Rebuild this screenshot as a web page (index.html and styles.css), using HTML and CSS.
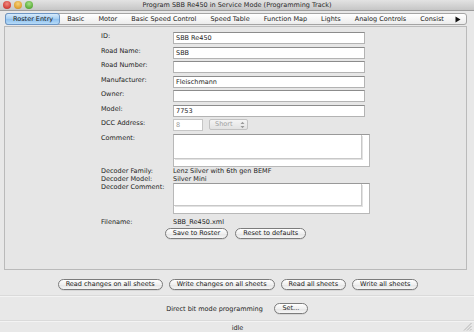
FILE: index.html
```html
<!DOCTYPE html>
<html>
<head>
<meta charset="utf-8">
<link rel="stylesheet" href="styles.css">
</head>
<body>
<div class="window">
  <div class="titlebar">
    <div class="lights">
      <span class="light red"></span>
      <span class="light yellow"></span>
      <span class="light green"></span>
    </div>
    <div class="title">Program SBB Re450 in Service Mode (Programming Track)</div>
  </div>
  <div class="tabwrap">
    <div class="tabs">
      <div class="tab sel">Roster Entry</div>
      <div class="tab">Basic</div>
      <div class="tab">Motor</div>
      <div class="tab">Basic Speed Control</div>
      <div class="tab">Speed Table</div>
      <div class="tab">Function Map</div>
      <div class="tab">Lights</div>
      <div class="tab">Analog Controls</div>
      <div class="tab">Consist</div>
      <div class="tab arrow"><svg width="6" height="7" viewBox="0 0 6 7"><path d="M0.5 0.5 L5.5 3.5 L0.5 6.5 Z" fill="#111"/></svg></div>
    </div>
  </div>
  <div class="panel">
    <div class="form">
      <div class="group">
        <div class="row"><div class="lbl">ID:</div><div class="field">SBB Re450</div></div>
        <div class="row"><div class="lbl">Road Name:</div><div class="field">SBB</div></div>
        <div class="row"><div class="lbl">Road Number:</div><div class="field"></div></div>
        <div class="row"><div class="lbl">Manufacturer:</div><div class="field">Fleischmann</div></div>
        <div class="row"><div class="lbl">Owner:</div><div class="field"></div></div>
        <div class="row"><div class="lbl">Model:</div><div class="field">7753</div></div>
        <div class="row">
          <div class="lbl">DCC Address:</div>
          <div class="dcc">
            <div class="field small dis">8</div>
            <div class="combo">Short<svg class="updown" width="5" height="8" viewBox="0 0 5 8"><path d="M0.5 3 L2.5 0.8 L4.5 3 Z M0.5 5 L2.5 7.2 L4.5 5 Z" fill="#9a9a9a"/></svg></div>
          </div>
        </div>
        <div class="row tall"><div class="lbl">Comment:</div><div class="scroll"><div class="area"></div></div></div>
      </div>
      <div class="group2">
        <div class="line"><div class="lbl">Decoder Family:</div><div class="val">Lenz Silver with 6th gen BEMF</div></div>
        <div class="line"><div class="lbl">Decoder Model:</div><div class="val">Silver Mini</div></div>
        <div class="row dcomment"><div class="lbl">Decoder Comment:</div><div class="scroll"><div class="area"></div></div></div>
        <div class="line fname"><div class="lbl">Filename:</div><div class="val">SBB_Re450.xml</div></div>
      </div>
    </div>
    <div class="btnrow">
      <button class="btn">Save to Roster</button>
      <button class="btn">Reset to defaults</button>
    </div>
  </div>
  <div class="actions">
    <button class="btn">Read changes on all sheets</button>
    <button class="btn">Write changes on all sheets</button>
    <button class="btn">Read all sheets</button>
    <button class="btn">Write all sheets</button>
  </div>
  <div class="sep"></div>
  <div class="direct">
    <span>Direct bit mode programming</span>
    <button class="btn set">Set...</button>
  </div>
  <div class="sep sep2"></div>
  <div class="status">
    <span>idle</span>
    <svg class="grip" width="9" height="9" viewBox="0 0 9 9"><path d="M8.5 1 L1 8.5 M8.5 4 L4 8.5 M8.5 7 L7 8.5" stroke="#a8a8a8" stroke-width="0.8"/></svg>
  </div>
</div>
</body>
</html>
```

FILE: styles.css
```css
* { box-sizing: border-box; }
html, body {
  margin: 0;
  padding: 0;
}
body {
  width: 474px;
  height: 332px;
  overflow: hidden;
  background: #e8e8e8;
  font-family: "DejaVu Sans", "Liberation Sans", sans-serif;
  font-size: 6.5px;
  color: #1c1c1c;
}
.window {
  width: 474px;
  height: 332px;
  display: flex;
  flex-direction: column;
  background: #e8e8e8;
}
.titlebar {
  height: 11px;
  flex: none;
  position: relative;
  background: linear-gradient(#e3e3e3, #c6c6c6);
  border-bottom: 1px solid #9d9d9d;
  display: flex;
  align-items: center;
  justify-content: center;
}
.lights {
  position: absolute;
  left: 3px;
  top: 1px;
  display: flex;
  gap: 3px;
}
.light {
  width: 8px;
  height: 8px;
  border-radius: 50%;
  display: block;
}
.red { background: radial-gradient(circle at 50% 35%, #f08a80, #d2413a 65%, #a8302b); }
.yellow { background: radial-gradient(circle at 50% 35%, #f6d27a, #e0a232 65%, #b07a20); }
.green { background: radial-gradient(circle at 50% 35%, #a6e08a, #5fb03d 65%, #3f8a2a); }
.title {
  font-size: 6.5px;
  color: #2a2a2a;
  line-height: 10px;
}
.tabwrap {
  flex: none;
  padding: 2px 7px 0 5px;
}
.tabs {
  height: 12px;
  display: flex;
  align-items: stretch;
  background: linear-gradient(#ffffff, #ececec);
  border: 1px solid #a4a4a4;
  border-radius: 3px;
}
.tab {
  padding: 0 7px;
  display: flex;
  align-items: center;
  line-height: 10px;
  white-space: nowrap;
  color: #1a1a1a;
}
.tab.sel {
  background: linear-gradient(#d6eafb, #a3cdf2 50%, #8ec0ee 51%, #b6dbf8);
  border: 1px solid #6c95c4;
  border-radius: 3px;
  margin: -1px 0 -1px -1px;
  padding: 0 6px 0 7px;
}
.tab.arrow {
  padding: 0 0 0 4px;
}
.panel {
  flex: none;
  margin: 1px 0 0 4px;
  width: 463px;
  height: 244px;
  border: 1px solid #bababa;
  background: #e6e6e6;
  padding: 5px 0 0 96px;
  display: flex;
  flex-direction: column;
}
.form {
  display: flex;
  flex-direction: column;
}
.group {
  display: flex;
  flex-direction: column;
  gap: 2.5px;
}
.row {
  display: flex;
  height: 12px;
}
.lbl {
  width: 72px;
  flex: none;
  line-height: 8px;
  white-space: nowrap;
}
.field {
  width: 192px;
  height: 12px;
  background: #fff;
  border: 1px solid #b3b3b3;
  border-top-color: #8c8c8c;
  padding: 0 2px;
  line-height: 10px;
  white-space: nowrap;
}
.dcc {
  display: flex;
  gap: 6px;
}
.field.small {
  width: 30px;
}
.field.dis {
  color: #9a9a9a;
  border-color: #c6c6c6;
}
.combo {
  width: 39px;
  height: 11px;
  border: 1px solid #c2c2c2;
  border-radius: 2px;
  background: linear-gradient(#f4f4f4, #e2e2e2);
  color: #a0a0a0;
  padding: 0 2px 0 5px;
  line-height: 9px;
  display: flex;
  align-items: center;
  justify-content: space-between;
}
.row.tall {
  height: 33px;
}
.scroll {
  width: 197px;
  height: 100%;
  background: #fff;
  border: 1px solid #b8b8b8;
  border-top-color: #999;
}
.area {
  width: 188px;
  height: calc(100% - 7px);
  border-right: 1px solid #c8c8c8;
  border-bottom: 1px solid #c8c8c8;
  box-shadow: 1px 1px 0 #e2e2e2;
}
.group2 {
  display: flex;
  flex-direction: column;
  margin-top: 0.5px;
}
.line {
  display: flex;
  height: 8px;
  line-height: 8px;
}
.val {
  white-space: nowrap;
}
.row.dcomment {
  height: 31px;
}
.line.fname {
  margin-top: 4px;
}
.btnrow {
  margin: 2px 0 0 -96px;
  display: flex;
  justify-content: center;
  gap: 7px;
}
.btn {
  font-family: "DejaVu Sans", "Liberation Sans", sans-serif;
  font-size: 6.5px;
  color: #1a1a1a;
  height: 11px;
  padding: 0 7px;
  margin: 0;
  border: 1px solid #7c7c7c;
  border-radius: 6px;
  background: linear-gradient(#ffffff, #f0f0f0 50%, #e4e4e4 51%, #f6f6f6);
  line-height: 9px;
  white-space: nowrap;
  box-shadow: 0 0.5px 0 rgba(0,0,0,0.15);
}
.btn.set {
  min-width: 34px;
}
.actions {
  flex: none;
  margin-top: 9px;
  display: flex;
  justify-content: center;
  gap: 6px;
  padding-left: 2px;
}
.sep {
  flex: none;
  height: 2px;
  margin-top: 5px;
  background: #dadada;
  border-bottom: 1px solid #f3f3f3;
}
.direct {
  flex: none;
  margin-top: 6px;
  display: flex;
  justify-content: center;
  align-items: center;
  gap: 11px;
  height: 11px;
}
.sep2 {
  margin-top: 6px;
}
.status {
  flex: 1;
  position: relative;
  display: flex;
  justify-content: center;
  align-items: center;
  padding: 2px 0 0 1px;
}
.grip {
  position: absolute;
  right: 2px;
  bottom: 1px;
}
```
